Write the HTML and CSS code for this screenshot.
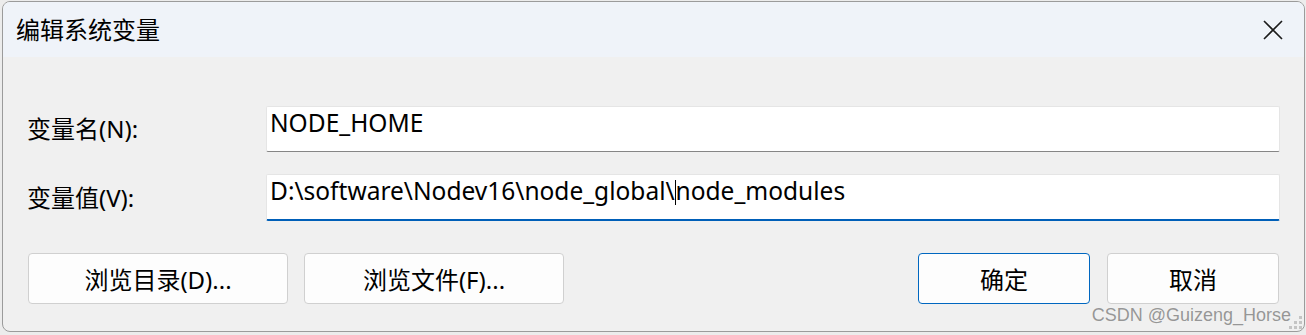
FILE: index.html
```html
<!DOCTYPE html>
<html lang="zh-CN">
<head>
    <meta charset="UTF-8">
    <meta name="viewport" content="width=device-width, initial-scale=1.0">
    <title>编辑系统变量</title>
    <link rel="stylesheet" href="styles.css">
</head>
<body>
    <div class="window">
        <!-- Barre de titre -->
        <div class="title-bar">
            <span class="title">编辑系统变量</span>
            <svg class="close-icon" width="20" height="20" viewBox="0 0 20 20">
                <path d="M1 1 L19 19 M19 1 L1 19" stroke="#1b1b1b" stroke-width="1.6" fill="none"/>
            </svg>
        </div>

        <div class="form">
            <div class="form-row">
                <label class="label">变量名(N):</label>
                <div class="field">NODE_HOME</div>
            </div>
            <div class="form-row">
                <label class="label">变量值(V):</label>
                <div class="field focused">D:\software\Nodev16\node_global\<span class="caret"></span>node_modules</div>
            </div>
        </div>

        <div class="button-row">
            <button class="btn btn-wide">浏览目录(D)...</button>
            <button class="btn btn-wide">浏览文件(F)...</button>
            <div class="spacer"></div>
            <button class="btn btn-small btn-default">确定</button>
            <button class="btn btn-small">取消</button>
        </div>

        <div class="watermark">CSDN @Guizeng_Horse</div>
        <svg class="grip" width="16" height="16" viewBox="0 0 16 16">
            <rect x="12" y="2" width="3" height="3" fill="#c4c4c4"/>
            <rect x="7" y="7" width="3" height="3" fill="#c4c4c4"/>
            <rect x="12" y="7" width="3" height="3" fill="#c4c4c4"/>
            <rect x="2" y="12" width="3" height="3" fill="#c4c4c4"/>
            <rect x="7" y="12" width="3" height="3" fill="#c4c4c4"/>
            <rect x="12" y="12" width="3" height="3" fill="#c4c4c4"/>
        </svg>
    </div>
</body>
</html>
```

FILE: styles.css
```css
body {
    margin: 0;
    background-color: #ececec;
    font-family: "Noto Sans", "Noto Sans CJK SC", sans-serif;
    font-size: 24px;
    color: #000000;
}
.window {
    position: relative;
    margin: 1px 0 0 2px;
    width: 1303px;
    height: 331px;
    box-sizing: border-box;
    border: 1px solid #9b9b9b;
    border-radius: 8px;
    background-color: #f0f0f0;
    overflow: hidden;
}
.title-bar {
    height: 55px;
    background-color: #eff3f9;
    display: flex;
    align-items: center;
    justify-content: space-between;
    padding: 0 21px 0 13px;
}
.title {
    font-size: 24px;
    line-height: 28px;
}
.close-icon {
    display: block;
}
.form {
    padding: 49px 24px 0 24px;
    display: flex;
    flex-direction: column;
    gap: 22px;
}
.form-row {
    display: flex;
    align-items: center;
}
.label {
    width: 239px;
    flex: 0 0 auto;
    line-height: 28px;
}
.field {
    flex: 1 1 auto;
    height: 46px;
    box-sizing: border-box;
    background-color: #ffffff;
    border: 1px solid #e5e5e5;
    border-bottom: 1px solid #868686;
    border-radius: 2px;
    padding: 2px 3px 0 3px;
    font-size: 24.5px;
    line-height: 28px;
    white-space: nowrap;
}
.field.focused {
    height: 47px;
    border-bottom: 2px solid #005fb8;
}
.caret {
    display: inline-block;
    width: 1px;
    height: 25px;
    background-color: #000000;
    vertical-align: -5px;
}
.button-row {
    display: flex;
    padding: 32px 25px 0 25px;
    gap: 16px;
}
.spacer {
    flex: 1 1 auto;
}
.btn {
    height: 51px;
    box-sizing: border-box;
    background-color: #fdfdfd;
    border: 1px solid #d0d0d0;
    border-radius: 4px;
    font-family: inherit;
    font-size: 24px;
    color: #000000;
    padding: 0;
}
.btn-wide {
    width: 260px;
}
.btn-small {
    width: 172px;
    margin-left: 1px;
}
.btn-default {
    border-color: #0067c0;
}
.watermark {
    position: absolute;
    right: 13px;
    bottom: 5px;
    font-family: "Liberation Sans", sans-serif;
    font-size: 18px;
    color: rgba(120, 120, 120, 0.75);
}
.grip {
    position: absolute;
    right: 1px;
    bottom: 1px;
}
```
